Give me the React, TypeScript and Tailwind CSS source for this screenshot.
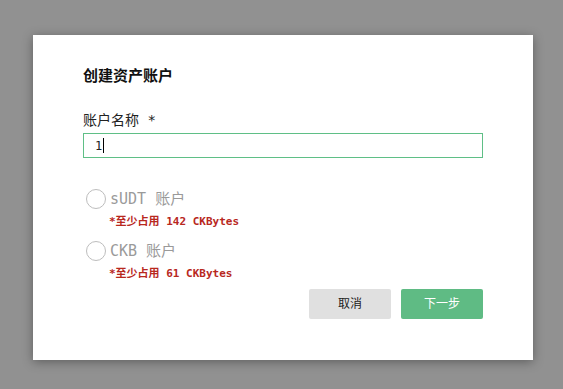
import React from "react";

const mono = { fontFamily: '"DejaVu Sans Mono", "Noto Sans CJK SC", monospace' };

function Radio({ label, note }: { label: string; note: string }) {
  return (
    <div className="flex flex-col">
      <div className="flex items-center gap-[4px]">
        <span className="w-[20px] h-[20px] rounded-full border border-[#bdbdbd] bg-white box-border" />
        <span className="text-[15px] text-[#9a9a9a] leading-[20px]" style={mono}>{label}</span>
      </div>
      <div className="pl-[23px] mt-[6px] text-[11px] font-bold text-[#b8281e] leading-[14px]" style={mono}>{note}</div>
    </div>
  );
}

export default function App() {
  return (
    <div className="w-[563px] h-[389px] bg-[#919191] pt-[35px] pl-[33px] overflow-hidden" style={mono}>
      <div className="w-[500px] h-[325px] bg-white shadow-[0_2px_10px_rgba(0,0,0,0.35)] pl-[50px] pr-[50px] pt-[30px] flex flex-col">
        <h1 className="text-[15px] font-bold text-[#111] leading-[22px]">创建资产账户</h1>
        <div className="mt-[23px] text-[14px] text-[#222] leading-[20px]">账户名称 *</div>
        <div className="mt-[3px] h-[25px] border border-[#5fbf86] flex items-center pl-[11px] text-[12px] text-[#222]">
          <span>1</span>
          <span className="w-[1px] h-[15px] bg-black ml-[1px]" />
        </div>
        <div className="mt-[31px] flex flex-col gap-[12px] pl-[3px]">
          <Radio label="sUDT 账户" note="*至少占用 142 CKBytes" />
          <Radio label="CKB 账户" note="*至少占用 61 CKBytes" />
        </div>
        <div className="flex justify-end gap-[10px] mt-[8px]">
          <button className="w-[82px] h-[30px] rounded-[2px] bg-[#e0e0e0] text-[12px] text-[#222]" style={mono}>取消</button>
          <button className="w-[82px] h-[30px] rounded-[2px] bg-[#5fbb84] text-[12px] text-white" style={mono}>下一步</button>
        </div>
      </div>
    </div>
  );
}
